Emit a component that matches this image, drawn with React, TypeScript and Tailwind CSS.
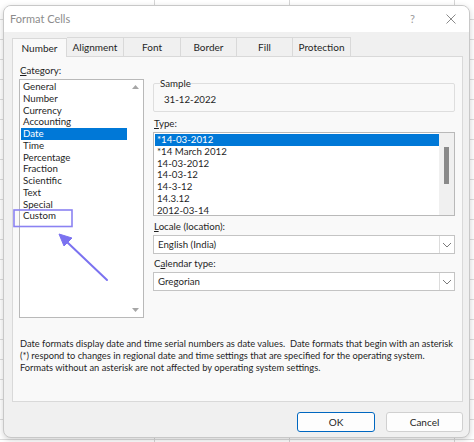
import React from 'react';

const categories = ['General', 'Number', 'Currency', 'Accounting', 'Date', 'Time', 'Percentage', 'Fraction', 'Scientific', 'Text', 'Special', 'Custom'];
const types = ['*14-03-2012', '*14 March 2012', '14-03-2012', '14-03-12', '14-3-12', '14.3.12', '2012-03-14'];
const tabs = [
  { label: 'Number', w: 'w-[55px]' },
  { label: 'Alignment', w: 'w-[57px]' },
  { label: 'Font', w: 'w-[57px]' },
  { label: 'Border', w: 'w-[56px]' },
  { label: 'Fill', w: 'w-[56px]' },
  { label: 'Protection', w: 'w-[58px]' },
];

const Chevron = () => (
  <svg width="10" height="6" viewBox="0 0 10 6" fill="none">
    <path d="M1 1l4 4 4-4" stroke="#7a7a7a" strokeWidth="1" />
  </svg>
);

const Select = ({ value }: { value: string }) => (
  <div className="h-[19px] flex border border-[#c4c4c4] bg-white">
    <div className="flex-1 pl-[4px] leading-[17px]">{value}</div>
    <div className="w-[15px] border-l border-[#dcdcdc] flex items-center justify-center">
      <Chevron />
    </div>
  </div>
);

export default function App() {
  return (
    <div className="relative w-[474px] h-[442px] pl-[3px] pt-[5px] overflow-hidden bg-white bg-[linear-gradient(90deg,transparent_154px,#d6d6d6_154px,#d6d6d6_155px,transparent_155px,transparent_289px,#d6d6d6_289px,#d6d6d6_290px,transparent_290px,transparent_454px,#d6d6d6_454px,#d6d6d6_455px,transparent_455px),repeating-linear-gradient(180deg,transparent_0px,transparent_19px,#dcdcdc_19px,#dcdcdc_20px)] font-['Lato','Liberation_Sans',sans-serif] text-[9.7px] text-[#1f1f1f]">
      <div className="w-[467px] h-[433px] flex flex-col rounded-[8px] overflow-hidden border border-[#c8c8c8] shadow-[0_2px_6px_rgba(0,0,0,0.18)] bg-[#f0f0f0]">
        {/* title bar */}
        <div className="h-[26px] shrink-0 bg-white flex items-center pl-[6px] pr-[13px]">
          <span className="text-[11px] text-[#8c8c8c]">Format Cells</span>
          <span className="ml-auto mr-[31px] text-[11px] text-[#9a9a9a]">?</span>
          <svg width="10" height="10" viewBox="0 0 10 10">
            <path d="M0.5 0.5l9 9M9.5 0.5l-9 9" stroke="#8a8a8a" strokeWidth="1" />
          </svg>
        </div>

        <div className="flex-1 flex flex-col pl-[8px] pr-[6px] pt-[5px]">
          {/* tabs */}
          <div className="h-[19px] flex shrink-0">
            {tabs.map((t, i) => (
              <div
                key={t.label}
                className={`${t.w} flex items-center justify-center pt-[1px] border-t border-r border-[#d9d9d9] text-[10px] ${i === 0 ? 'border-l bg-[#f9f9f9] relative top-[1px] z-10' : 'bg-[#f0f0f0]'}`}
              >
                {t.label}
              </div>
            ))}
          </div>

          {/* panel */}
          <div className="h-[346px] shrink-0 border border-[#d9d9d9] bg-[#f9f9f9] pl-[6px] pr-[7px] pt-[7px]">
            <div className="flex gap-[9px]">
              {/* category column */}
              <div className="w-[125px] shrink-0">
                <div className="leading-[13px] pl-[1px]"><span className="underline">C</span>ategory:</div>
                <div className="mt-[2px] h-[239px] flex border border-[#b9b9b9] bg-white">
                  <div className="flex-1 pt-[1px] pl-[1px]">
                    {categories.map((c) => (
                      <div
                        key={c}
                        className={`h-[11.75px] leading-[11.75px] pl-[2px] ${c === 'Date' ? 'bg-[#0078d7] text-white' : ''}`}
                      >
                        {c}
                      </div>
                    ))}
                  </div>
                  <div className="w-[16px] flex flex-col items-center justify-between py-[5px]">
                    <svg width="7" height="4" viewBox="0 0 7 4"><path d="M0 4L3.5 0L7 4z" fill="#a6a6a6" /></svg>
                    <svg width="7" height="4" viewBox="0 0 7 4"><path d="M0 0L3.5 4L7 0z" fill="#a6a6a6" /></svg>
                  </div>
                </div>
              </div>

              {/* right column */}
              <div className="flex-1 flex flex-col">
                <fieldset className="mt-[13px] h-[35px] border border-[#dedede] px-[6px] rounded-[2px]">
                  <legend className="px-[0px] leading-[13px]">Sample</legend>
                  <div className="pl-[4px] pt-[3px] leading-[13px]">31-12-2022</div>
                </fieldset>
                <div className="mt-[5px] leading-[13px] pl-[1px]"><span className="underline">T</span>ype:</div>
                <div className="mt-[2px] h-[84px] flex border border-[#b9b9b9] bg-white">
                  <div className="flex-1 pt-[1px] pl-[1px]">
                    {types.map((t, i) => (
                      <div
                        key={t}
                        className={`h-[11.75px] leading-[11.75px] pl-[2px] ${i === 0 ? 'bg-[#0078d7] text-white' : ''}`}
                      >
                        {t}
                      </div>
                    ))}
                  </div>
                  <div className="w-[15px] bg-[#f0f0f0] flex justify-center pt-[14px]">
                    <div className="w-[5px] h-[37px] bg-[#8a8a8a]" />
                  </div>
                </div>
                <div className="mt-[4px] leading-[13px] pl-[1px]"><span className="underline">L</span>ocale (location):</div>
                <div className="mt-[2px]"><Select value="English (India)" /></div>
                <div className="mt-[3px] leading-[13px] pl-[1px]">C<span className="underline">a</span>lendar type:</div>
                <div className="mt-[2px]"><Select value="Gregorian" /></div>
              </div>
            </div>

            <p className="mt-[20px] pl-[1px] leading-[12px] text-[9.3px] whitespace-nowrap">
              Date formats display date and time serial numbers as date values.&nbsp; Date formats that begin with an asterisk
              <br />
              (*) respond to changes in regional date and time settings that are specified for the operating system.
              <br />
              Formats without an asterisk are not affected by operating system settings.
            </p>
          </div>

          {/* footer */}
          <div className="flex-1 flex justify-end items-start gap-[11px] pt-[10px]">
            <button className="w-[78px] h-[20px] bg-[#fdfdfd] border border-[#0067c0] rounded-[3px] text-[10px]">OK</button>
            <button className="w-[77px] h-[20px] bg-[#fdfdfd] border border-[#d0d0d0] rounded-[3px] text-[10px]">Cancel</button>
          </div>
        </div>
      </div>

      {/* annotation over the category list */}
      <svg className="absolute left-0 top-0 pointer-events-none" width="474" height="442" viewBox="0 0 474 442">
        <rect x="14" y="210" width="58" height="16.5" fill="none" stroke="#8b82f2" strokeWidth="1.6" />
        <path d="M107 280L67 242" stroke="#7b72f0" strokeWidth="2" strokeLinecap="round" />
        <path d="M59 234L72 238L64 246z" fill="#7b72f0" stroke="#7b72f0" strokeWidth="1" strokeLinejoin="round" />
      </svg>
    </div>
  );
}
